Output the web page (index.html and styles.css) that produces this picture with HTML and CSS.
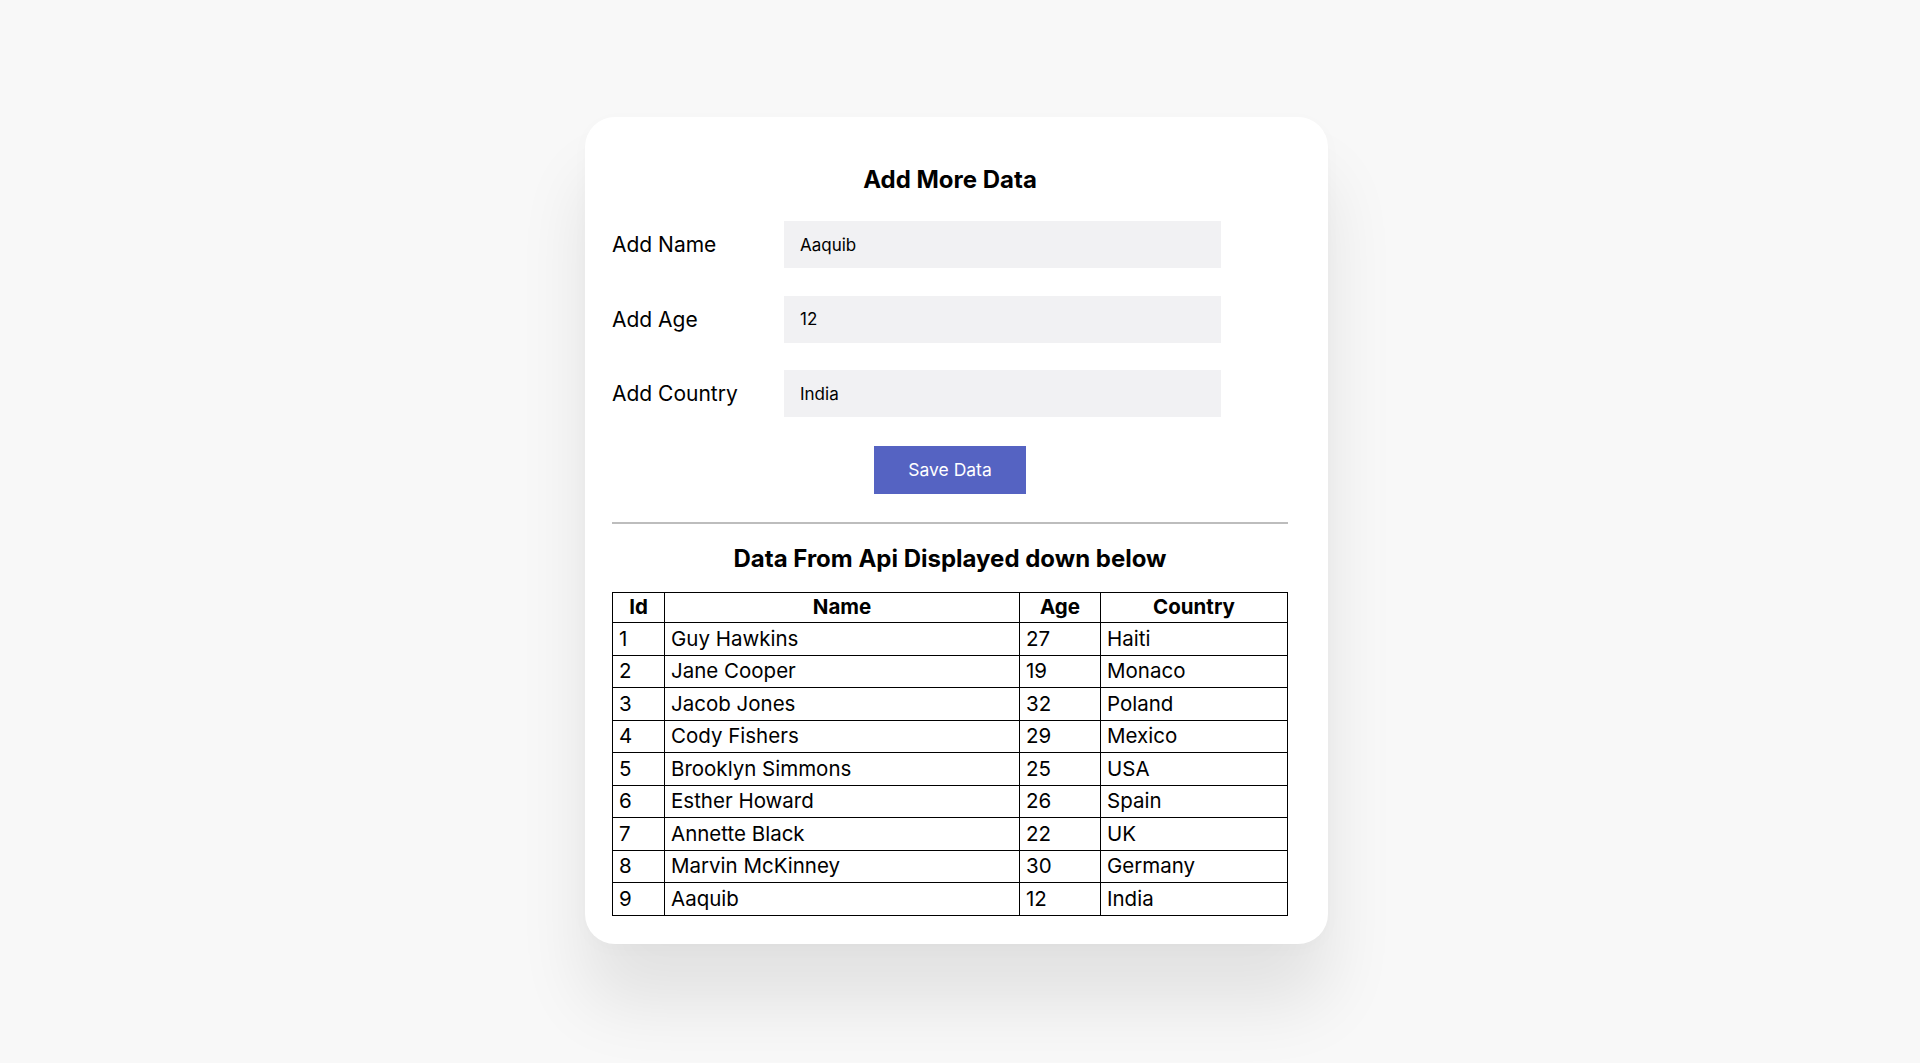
FILE: index.html
```html
<!DOCTYPE html>
<html lang="en">
<head>
<meta charset="utf-8">
<title>Add More Data</title>
<link rel="stylesheet" href="styles.css">
</head>
<body>
<div class="card">
  <h2 class="title">Add More Data</h2>
  <div class="form">
    <div class="row">
      <label class="label" for="name">Add Name</label>
      <input class="field" id="name" type="text" value="Aaquib">
    </div>
    <div class="row">
      <label class="label" for="age">Add Age</label>
      <input class="field" id="age" type="text" value="12">
    </div>
    <div class="row">
      <label class="label" for="country">Add Country</label>
      <input class="field" id="country" type="text" value="India">
    </div>
  </div>
  <div class="actions">
    <button class="save" type="button">Save Data</button>
  </div>
  <hr class="divider">
  <h2 class="subtitle">Data From Api Displayed down below</h2>
  <table class="data">
    <colgroup>
      <col class="c-id"><col class="c-name"><col class="c-age"><col class="c-country">
    </colgroup>
    <thead>
      <tr><th>Id</th><th>Name</th><th>Age</th><th>Country</th></tr>
    </thead>
    <tbody>
      <tr><td>1</td><td>Guy Hawkins</td><td>27</td><td>Haiti</td></tr>
      <tr><td>2</td><td>Jane Cooper</td><td>19</td><td>Monaco</td></tr>
      <tr><td>3</td><td>Jacob Jones</td><td>32</td><td>Poland</td></tr>
      <tr><td>4</td><td>Cody Fishers</td><td>29</td><td>Mexico</td></tr>
      <tr><td>5</td><td>Brooklyn Simmons</td><td>25</td><td>USA</td></tr>
      <tr><td>6</td><td>Esther Howard</td><td>26</td><td>Spain</td></tr>
      <tr><td>7</td><td>Annette Black</td><td>22</td><td>UK</td></tr>
      <tr><td>8</td><td>Marvin McKinney</td><td>30</td><td>Germany</td></tr>
      <tr><td>9</td><td>Aaquib</td><td>12</td><td>India</td></tr>
    </tbody>
  </table>
</div>
</body>
</html>
```

FILE: styles.css
```css
html, body {
  margin: 0;
  padding: 0;
  background: #f8f8f8;
  font-family: Inter, "Noto Sans", "Liberation Sans", sans-serif;
  color: #000;
}

body {
  height: 1063px;
  overflow: hidden;
}

.card {
  box-sizing: border-box;
  width: 743px;
  margin: 117px 0 0 585px;
  padding: 49px 40px 28px 27px;
  background: #fff;
  border-radius: 30px;
  box-shadow: 0 60px 70px rgba(0, 0, 0, 0.09), 0 4px 20px rgba(0, 0, 0, 0.02);
}

.title {
  margin: 0;
  text-align: center;
  font-size: 24px;
  line-height: 28px;
  font-weight: 700;
}

.form {
  display: flex;
  flex-direction: column;
  gap: 27.5px;
  margin-top: 27px;
}

.row {
  display: flex;
  align-items: center;
}

.label {
  width: 172px;
  flex: none;
  font-size: 21px;
}

.field {
  box-sizing: border-box;
  width: 437px;
  height: 47px;
  border: none;
  outline: none;
  background: #f1f1f3;
  padding: 0 16px;
  font-family: inherit;
  font-size: 17px;
  color: #000;
}

.actions {
  display: flex;
  justify-content: center;
  margin-top: 28.5px;
}

.save {
  width: 152px;
  height: 48px;
  border: none;
  background: #5563c2;
  color: #fff;
  font-family: inherit;
  font-size: 17.5px;
}

.divider {
  margin: 28px 0 0;
  border: none;
  border-top: 2px solid #bdbdbd;
  height: 0;
}

.subtitle {
  margin: 21px 0 0;
  text-align: center;
  font-size: 24px;
  line-height: 28px;
  font-weight: 700;
}

.data {
  width: 675px;
  margin-top: 19px;
  border-collapse: collapse;
  table-layout: fixed;
  font-size: 20.5px;
}

.c-id { width: 52px; }
.c-name { width: 355px; }
.c-age { width: 81px; }
.c-country { width: 187px; }

.data th,
.data td {
  border: 1.5px solid #000;
  padding: 0 6px;
  height: 31.5px;
  line-height: 24px;
}

.data th {
  height: 29.5px;
  text-align: center;
  font-weight: 700;
}

.data td {
  text-align: left;
}
```
